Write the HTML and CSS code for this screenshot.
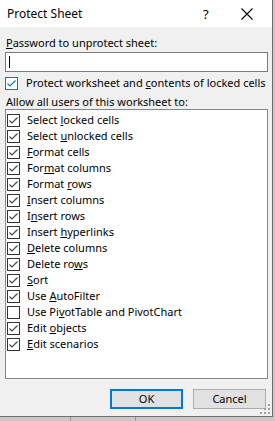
FILE: index.html
```html
<!DOCTYPE html>
<html>
<head>
<meta charset="utf-8">
<link rel="stylesheet" href="styles.css">
</head>
<body>
<div class="dialog">
  <div class="titlebar">
    <span class="title">Protect Sheet</span>
    <span class="help">?</span>
    <svg class="close" width="14" height="14" viewBox="0 0 14 14"><path d="M1.5 1.5 L12.5 12.5 M12.5 1.5 L1.5 12.5" stroke="#000" stroke-width="1.1" fill="none"/></svg>
  </div>
  <div class="content">
    <div class="lbl"><u>P</u>assword to unprotect sheet:</div>
    <div class="input"><span class="caret"></span></div>
    <div class="row main">
      <span class="cb blue"><svg width="13" height="13" viewBox="0 0 13 13"><path d="M2.5 6.5 L5 9 L10.5 3.5" stroke="#0078d7" stroke-width="1.1" fill="none"/></svg></span>
      <span class="txt">Protect worksheet and <u>c</u>ontents of locked cells</span>
    </div>
    <div class="lbl allow">Allow all users of this worksheet to:</div>
    <div class="list">
      <div class="row item"><span class="cb"><svg width="13" height="13" viewBox="0 0 13 13"><path d="M2.5 6.5 L5 9 L10.5 3.5" stroke="#444" stroke-width="1.1" fill="none"/></svg></span><span class="txt">Select <u>l</u>ocked cells</span></div>
      <div class="row item"><span class="cb"><svg width="13" height="13" viewBox="0 0 13 13"><path d="M2.5 6.5 L5 9 L10.5 3.5" stroke="#444" stroke-width="1.1" fill="none"/></svg></span><span class="txt">Select <u>u</u>nlocked cells</span></div>
      <div class="row item"><span class="cb"><svg width="13" height="13" viewBox="0 0 13 13"><path d="M2.5 6.5 L5 9 L10.5 3.5" stroke="#444" stroke-width="1.1" fill="none"/></svg></span><span class="txt"><u>F</u>ormat cells</span></div>
      <div class="row item"><span class="cb"><svg width="13" height="13" viewBox="0 0 13 13"><path d="M2.5 6.5 L5 9 L10.5 3.5" stroke="#444" stroke-width="1.1" fill="none"/></svg></span><span class="txt">For<u>m</u>at columns</span></div>
      <div class="row item"><span class="cb"><svg width="13" height="13" viewBox="0 0 13 13"><path d="M2.5 6.5 L5 9 L10.5 3.5" stroke="#444" stroke-width="1.1" fill="none"/></svg></span><span class="txt">Format <u>r</u>ows</span></div>
      <div class="row item"><span class="cb"><svg width="13" height="13" viewBox="0 0 13 13"><path d="M2.5 6.5 L5 9 L10.5 3.5" stroke="#444" stroke-width="1.1" fill="none"/></svg></span><span class="txt"><u>I</u>nsert columns</span></div>
      <div class="row item"><span class="cb"><svg width="13" height="13" viewBox="0 0 13 13"><path d="M2.5 6.5 L5 9 L10.5 3.5" stroke="#444" stroke-width="1.1" fill="none"/></svg></span><span class="txt">I<u>n</u>sert rows</span></div>
      <div class="row item"><span class="cb"><svg width="13" height="13" viewBox="0 0 13 13"><path d="M2.5 6.5 L5 9 L10.5 3.5" stroke="#444" stroke-width="1.1" fill="none"/></svg></span><span class="txt">Insert <u>h</u>yperlinks</span></div>
      <div class="row item"><span class="cb"><svg width="13" height="13" viewBox="0 0 13 13"><path d="M2.5 6.5 L5 9 L10.5 3.5" stroke="#444" stroke-width="1.1" fill="none"/></svg></span><span class="txt"><u>D</u>elete columns</span></div>
      <div class="row item"><span class="cb"><svg width="13" height="13" viewBox="0 0 13 13"><path d="M2.5 6.5 L5 9 L10.5 3.5" stroke="#444" stroke-width="1.1" fill="none"/></svg></span><span class="txt">Delete ro<u>w</u>s</span></div>
      <div class="row item"><span class="cb"><svg width="13" height="13" viewBox="0 0 13 13"><path d="M2.5 6.5 L5 9 L10.5 3.5" stroke="#444" stroke-width="1.1" fill="none"/></svg></span><span class="txt"><u>S</u>ort</span></div>
      <div class="row item"><span class="cb"><svg width="13" height="13" viewBox="0 0 13 13"><path d="M2.5 6.5 L5 9 L10.5 3.5" stroke="#444" stroke-width="1.1" fill="none"/></svg></span><span class="txt">Use <u>A</u>utoFilter</span></div>
      <div class="row item"><span class="cb"></span><span class="txt">Use Pi<u>v</u>otTable and PivotChart</span></div>
      <div class="row item"><span class="cb"><svg width="13" height="13" viewBox="0 0 13 13"><path d="M2.5 6.5 L5 9 L10.5 3.5" stroke="#444" stroke-width="1.1" fill="none"/></svg></span><span class="txt">Edit <u>o</u>bjects</span></div>
      <div class="row item"><span class="cb"><svg width="13" height="13" viewBox="0 0 13 13"><path d="M2.5 6.5 L5 9 L10.5 3.5" stroke="#444" stroke-width="1.1" fill="none"/></svg></span><span class="txt"><u>E</u>dit scenarios</span></div>
    </div>
    <div class="buttons">
      <div class="btn ok">OK</div>
      <div class="btn">Cancel</div>
    </div>
  </div>
  <svg class="grip" width="10" height="10" viewBox="0 0 10 10">
    <rect x="8" y="0" width="2" height="2" fill="#a0a0a0"/>
    <rect x="4" y="4" width="2" height="2" fill="#a0a0a0"/>
    <rect x="8" y="4" width="2" height="2" fill="#a0a0a0"/>
    <rect x="0" y="8" width="2" height="2" fill="#a0a0a0"/>
    <rect x="4" y="8" width="2" height="2" fill="#a0a0a0"/>
    <rect x="8" y="8" width="2" height="2" fill="#a0a0a0"/>
  </svg>
</div>
</body>
</html>
```

FILE: styles.css
```css
html, body {
  margin: 0;
  padding: 0;
}
body {
  width: 275px;
  height: 421px;
  overflow: hidden;
  background-color: #c9c9c9;
  background-image:
    linear-gradient(to right, transparent 70px, #9a9a9a 70px, #9a9a9a 71px, transparent 71px),
    linear-gradient(to right, transparent 135px, #9a9a9a 135px, #9a9a9a 136px, transparent 136px);
  font-family: "Noto Sans", "Open Sans", sans-serif;
  font-size: 11px;
  color: #000;
}
.dialog {
  position: relative;
  width: 272px;
  height: 416px;
  background: #f0f0f0;
  border-right: 1px solid #6f6f6f;
  border-bottom: 1px solid #6f6f6f;
}
.titlebar {
  height: 27px;
  background: #fff;
  display: flex;
  align-items: center;
}
.title {
  font-size: 12px;
  margin-left: 7px;
  flex: 1;
}
.help {
  font-size: 13px;
  width: 10px;
  margin-right: 27px;
}
.close {
  margin-right: 18px;
}
.content {
  padding: 8px 5px 0 5px;
}
.lbl {
  line-height: 15px;
  height: 15px;
  padding-left: 1px;
  white-space: nowrap;
}
.input {
  margin-top: 2px;
  height: 18px;
  width: 261px;
  background: #fff;
  border: 1px solid #7a7a7a;
  position: relative;
}
.caret {
  position: absolute;
  left: 3px;
  top: 3px;
  width: 1px;
  height: 12px;
  background: #000;
}
.row {
  display: flex;
  align-items: center;
  white-space: nowrap;
}
.main {
  margin-top: 4px;
  height: 14px;
}
.main .txt {
  margin-left: 8px;
  line-height: 14px;
}
.allow {
  margin-top: 4px;
}
.cb {
  width: 11px;
  height: 11px;
  border: 1px solid #333;
  background: #fff;
  flex: none;
  position: relative;
}
.cb svg {
  position: absolute;
  left: -1px;
  top: -1px;
}
.cb.blue {
  border-color: #0078d7;
}
.list {
  height: 266px;
  width: 261px;
  background: #fff;
  border: 1px solid #828790;
  padding-top: 2px;
}
.item {
  height: 16px;
  padding-left: 1px;
}
.item .txt {
  margin-left: 7px;
  line-height: 16px;
}
.buttons {
  display: flex;
  justify-content: flex-end;
  gap: 10px;
  margin-top: 10px;
  padding-right: 1px;
}
.btn {
  box-sizing: border-box;
  width: 73px;
  height: 20px;
  background: #e1e1e1;
  border: 1px solid #adadad;
  text-align: center;
  line-height: 18px;
}
.btn.ok {
  border: 2px solid #0078d7;
  line-height: 16px;
}
.grip {
  position: absolute;
  right: 2px;
  bottom: 2px;
}
```
